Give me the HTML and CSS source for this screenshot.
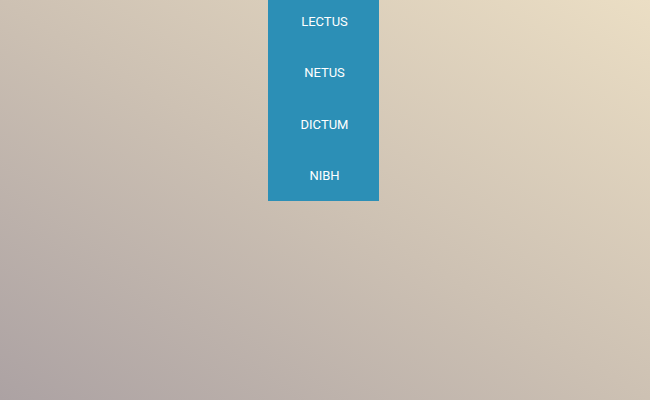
FILE: index.html
```html
<!DOCTYPE html>
<html lang="en">
  <head>
    <title>Menu</title>
    <meta charset="UTF-8" />
    <meta name="viewport" content="width=device-width, initial-scale=1.0" />
    <link rel="stylesheet" href="styles.css">
  </head>
  <body>
    <nav class="menu">
      <ul class="menu-list">
        <li class="menu-item"><a href="#">Lectus</a></li>
        <li class="menu-item"><a href="#">Netus</a></li>
        <li class="menu-item"><a href="#">Dictum</a></li>
        <li class="menu-item"><a href="#">Nibh</a></li>
      </ul>
    </nav>
  </body>
</html>
```

FILE: styles.css
```css
* {
  margin: 0;
  padding: 0;
  box-sizing: border-box;
}

html,
body {
  height: 100%;
}

body {
  font-family: Roboto, 'Liberation Sans', sans-serif;
  background: linear-gradient(to top right, #aca2a3 0%, #cdc1b3 50%, #ebdec4 100%);
  overflow: hidden;
}

.menu {
  width: 111px;
  margin-left: 268px;
  height: 201px;
  background: #2c8fb6;
  overflow: hidden;
}

.menu-list {
  list-style: none;
  margin-top: -4px;
}

.menu-item {
  height: 51.33px;
  display: flex;
  align-items: center;
  justify-content: center;
  padding-left: 2px;
}

.menu-item a {
  color: #fff;
  text-decoration: none;
  text-transform: uppercase;
  font-size: 13px;
  font-weight: 400;
}
```
